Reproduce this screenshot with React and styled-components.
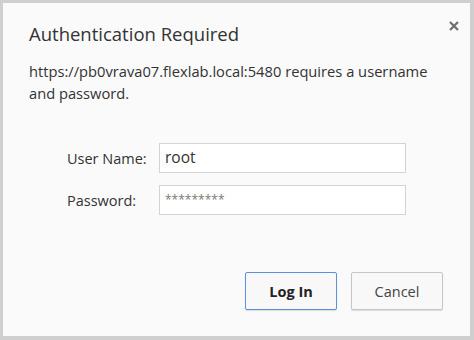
import React from 'react';
import styled, { createGlobalStyle } from 'styled-components';

const GlobalStyle = createGlobalStyle`
  html, body {
    margin: 0;
    padding: 0;
    background: #cfcfcf;
  }
  body {
    font-family: "Open Sans", "Noto Sans", Arial, sans-serif;
  }
`;

const Page = styled.div`
  width: 474px;
  height: 340px;
  padding: 3px 4px 4px 3px;
  box-sizing: border-box;
  background: #cfcfcf;
`;

const Dialog = styled.div`
  position: relative;
  height: 100%;
  background: #fafafa;
  box-sizing: border-box;
  padding: 18px 26px 0 26px;
  color: #333;
`;

const Title = styled.h1`
  margin: 0;
  font-size: 18.5px;
  font-weight: 400;
  color: #333;
`;

const Message = styled.p`
  margin: 14px 0 0 0;
  font-size: 14.7px;
  line-height: 22px;
  color: #333;
`;

const Form = styled.div`
  display: grid;
  grid-template-columns: 92px 247px;
  row-gap: 12px;
  align-items: center;
  margin: 39px 0 0 38px;
`;

const Label = styled.label`
  font-size: 14.5px;
  color: #333;
`;

const Field = styled.div`
  height: 30px;
  box-sizing: border-box;
  border: 1px solid #d4d4d4;
  background: #fff;
  padding: 0 5px 2px 5px;
  display: flex;
  align-items: center;
  font-size: ${(p) => (p.masked ? '12px' : '15.5px')};
  color: ${(p) => (p.masked ? '#777' : '#333')};
`;

const Buttons = styled.div`
  display: flex;
  justify-content: flex-end;
  gap: 14px;
  margin-top: 57px;
  padding-right: 1px;
`;

const Button = styled.button`
  width: 92px;
  height: 38px;
  box-sizing: border-box;
  background: #f8f8f8;
  border: 1px solid ${(p) => (p.primary ? '#5b8fe0' : '#c6c6c6')};
  border-radius: 2px;
  box-shadow: 0 1px 1px rgba(0, 0, 0, 0.12);
  font-family: "Open Sans", "Noto Sans", Arial, sans-serif;
  font-size: 14.5px;
  font-weight: ${(p) => (p.primary ? 700 : 400)};
  color: ${(p) => (p.primary ? '#222' : '#444')};
  cursor: pointer;
`;

const Close = styled.div`
  position: absolute;
  top: 12px;
  right: 10px;
  width: 12px;
  height: 12px;
`;

export default function App() {
  return (
    <Page>
      <GlobalStyle />
      <Dialog>
        <Close>
          <svg width="12" height="12" viewBox="0 0 12 12">
            <path d="M2 2 L10 10 M10 2 L2 10" stroke="#6e6e6e" strokeWidth="2.2" />
          </svg>
        </Close>
        <Title>Authentication Required</Title>
        <Message>
          https://pb0vrava07.flexlab.local:5480 requires a username
          <br />
          and password.
        </Message>
        <Form>
          <Label>User Name:</Label>
          <Field>root</Field>
          <Label>Password:</Label>
          <Field masked>*********</Field>
        </Form>
        <Buttons>
          <Button primary>Log In</Button>
          <Button>Cancel</Button>
        </Buttons>
      </Dialog>
    </Page>
  );
}
